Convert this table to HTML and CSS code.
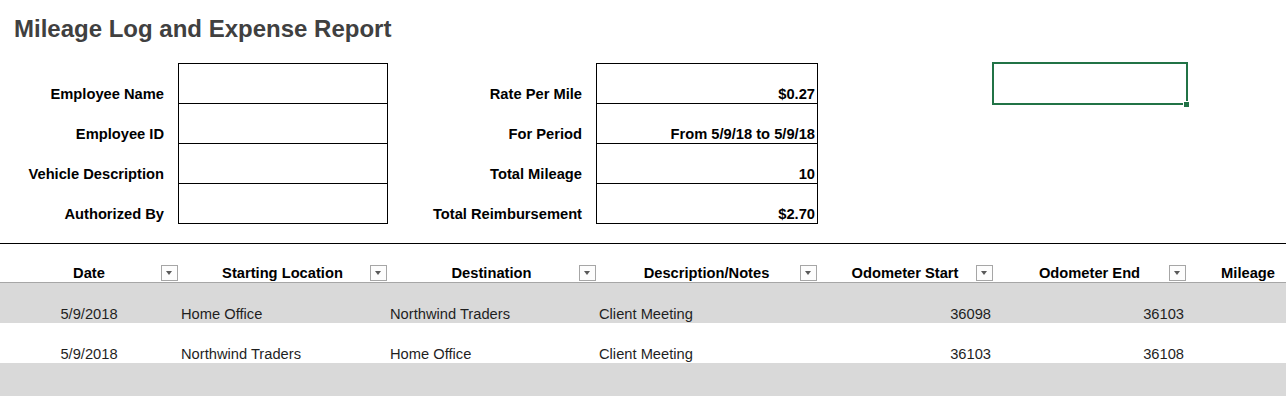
FILE: index.html
```html
<html><head>
  <meta charset="UTF-8">
  <meta name="viewport" content="width=device-width, initial-scale=1.0">
  <title>Mileage Log and Expense Report</title>
  <link rel="stylesheet" href="styles.css">
</head>
<body>
  <h1 class="title">Mileage Log and Expense Report</h1>

  <div class="info">
    <div class="group group-employee">
      <div class="label">Employee Name</div><div class="field"></div>
      <div class="label">Employee ID</div><div class="field"></div>
      <div class="label">Vehicle Description</div><div class="field"></div>
      <div class="label last">Authorized By</div><div class="field last"></div>
    </div>
    <div class="group group-totals">
      <div class="label">Rate Per Mile</div><div class="field">$0.27</div>
      <div class="label">For Period</div><div class="field">From 5/9/18 to 5/9/18</div>
      <div class="label">Total Mileage</div><div class="field">10</div>
      <div class="label last">Total Reimbursement</div><div class="field last">$2.70</div>
    </div>
    <div class="active-cell"></div>
  </div>

  <table class="log">
    <colgroup>
      <col style="width:178px">
      <col style="width:209px">
      <col style="width:209px">
      <col style="width:221px">
      <col style="width:176px">
      <col style="width:193px">
      <col style="width:124px">
    </colgroup>
    <thead>
      <tr>
        <th>Date<span class="filter"></span></th>
        <th>Starting Location<span class="filter"></span></th>
        <th>Destination<span class="filter"></span></th>
        <th>Description/Notes<span class="filter"></span></th>
        <th>Odometer Start<span class="filter"></span></th>
        <th>Odometer End<span class="filter"></span></th>
        <th>Mileage</th>
      </tr>
    </thead>
    <tbody>
      <tr class="band">
        <td class="center">5/9/2018</td>
        <td>Home Office</td>
        <td>Northwind Traders</td>
        <td>Client Meeting</td>
        <td class="num">36098</td>
        <td class="num">36103</td>
        <td></td>
      </tr>
      <tr>
        <td class="center">5/9/2018</td>
        <td>Northwind Traders</td>
        <td>Home Office</td>
        <td>Client Meeting</td>
        <td class="num">36103</td>
        <td class="num">36108</td>
        <td></td>
      </tr>
      <tr class="band">
        <td></td><td></td><td></td><td></td><td></td><td></td><td></td>
      </tr>
    </tbody>
  </table>
</body>
</html>
```

FILE: styles.css
```css
html, body {
  margin: 0;
  padding: 0;
  background-color: white;
  overflow: hidden;
  font-family: 'Liberation Sans', Arial, sans-serif;
  color: #000;
}
.title {
  margin: 16px 0 0 14px;
  font-size: 24px;
  line-height: 26px;
  font-weight: bold;
  color: #404040;
}

/* header block with the two label/field groups */
.info {
  display: flex;
  margin-top: 21px;
}
.group {
  display: grid;
  grid-template-rows: 40px 40px 40px 41px;
}
.group-employee {
  grid-template-columns: 178px 210px;
}
.group-totals {
  grid-template-columns: 208px 222px;
}
.label {
  display: flex;
  align-items: flex-end;
  justify-content: flex-end;
  padding-right: 14px;
  font-size: 14.7px;
  line-height: 17px;
  font-weight: bold;
}
.label.last {
  padding-bottom: 1px;
}
.field {
  display: flex;
  align-items: flex-end;
  justify-content: flex-end;
  padding-right: 2px;
  border: 1px solid #000;
  border-bottom: none;
  font-size: 14.7px;
  line-height: 17px;
  font-weight: bold;
}
.field.last {
  border-bottom: 1px solid #000;
}
.active-cell {
  position: relative;
  box-sizing: border-box;
  width: 196px;
  height: 43px;
  margin: -1px 0 0 174px;
  border: 2px solid #217346;
}
.active-cell:after {
  content: "";
  position: absolute;
  right: -3px;
  bottom: -4px;
  width: 5px;
  height: 5px;
  background-color: #217346;
  border-left: 1px solid white;
  border-top: 1px solid white;
}

/* trip table */
.log {
  margin-top: 19px;
  border-collapse: collapse;
  table-layout: fixed;
  width: 1310px;
  border-top: 1px solid #000;
  font-size: 14.7px;
  line-height: 17px;
}
.log th {
  position: relative;
  height: 39px;
  padding: 0;
  vertical-align: bottom;
  text-align: center;
  font-weight: bold;
  border-bottom: 1px solid #a6a6a6;
}
.log td {
  height: 40px;
  padding: 0 3px;
  vertical-align: bottom;
  color: #1f1f1f;
  white-space: nowrap;
}
.log tr.band td {
  background-color: #d9d9d9;
}
.log td.center {
  text-align: center;
}
.log td.num {
  text-align: right;
  padding-right: 2px;
}
.filter {
  position: absolute;
  right: 0;
  bottom: 1px;
  box-sizing: border-box;
  width: 17px;
  height: 16px;
  border: 1px solid #a6a6a6;
  background-color: #fdfdfd;
}
.filter:after {
  content: "";
  position: absolute;
  left: 4px;
  top: 5px;
  border-left: 3.5px solid transparent;
  border-right: 3.5px solid transparent;
  border-top: 4px solid #595959;
}
```
